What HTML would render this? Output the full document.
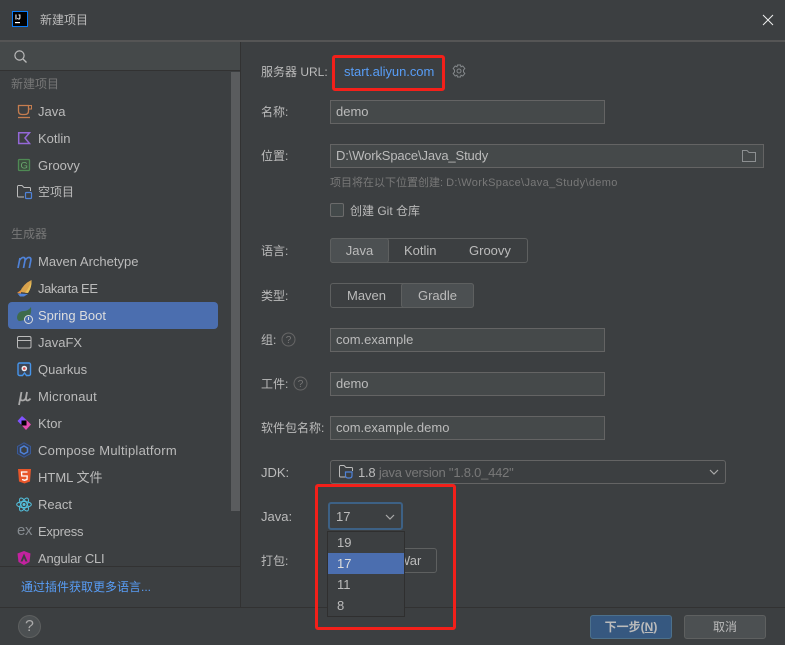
<!DOCTYPE html>
<html><head><meta charset="utf-8"><style>
html,body{margin:0;padding:0}
#r{position:relative;width:785px;height:645px;overflow:hidden;background:#3c3f41;font-family:"Liberation Sans","Noto Sans CJK SC",sans-serif;font-size:13px;color:#bbb}
#r div,#r span,#r svg{position:absolute;box-sizing:border-box}
#r span span{position:static}
.t{white-space:nowrap;line-height:18px;height:18px}
.f{background:#45494a;border:1px solid #646464;height:24px}
.s{font-size:12px}
.g{color:#777}
.c{text-align:center}
</style></head><body><div id="r">

<!-- title -->
<svg style="left:12px;top:11px" width="16" height="16" viewBox="0 0 16 16"><rect x=".5" y=".5" width="15" height="15" fill="#000" stroke="#087cfa"/><rect x="3" y="11" width="5" height="1.2" fill="#fff"/><text x="3" y="8.5" font-size="7" font-weight="bold" fill="#fff" font-family="Liberation Sans">IJ</text></svg>
<span class="t s" style="left:40px;top:11px">新建项目</span>
<svg style="left:762px;top:14px" width="12" height="12" viewBox="0 0 12 12"><path d="M1 1L11 11M11 1L1 11" stroke="#eee" stroke-width="1"/></svg>
<div style="left:0;top:40px;width:785px;height:2px;background:#555"></div>

<!-- search -->
<div style="left:0;top:42px;width:240px;height:28px;background:#45494a"></div>
<div style="left:0;top:70px;width:240px;height:1px;background:#323232"></div>
<svg style="left:13px;top:49px" width="15" height="15" viewBox="0 0 15 15"><circle cx="6.5" cy="6.5" r="4.6" fill="none" stroke="#bbb" stroke-width="1.2"/><path d="M10 10L13.5 13.5" stroke="#bbb" stroke-width="1.3"/></svg>
<div style="left:240px;top:42px;width:1px;height:565px;background:#323232"></div>
<div style="left:231px;top:72px;width:9px;height:439px;background:#5a5c5e"></div>

<!-- sidebar -->
<span class="t s g" style="left:11px;top:75px">新建项目</span>
<span class="t" style="left:38px;top:103px">Java</span>
<span class="t" style="left:38px;top:130px">Kotlin</span>
<span class="t" style="left:38px;top:157px">Groovy</span>
<span class="t s" style="left:38px;top:183px">空项目</span>
<span class="t s g" style="left:11px;top:225px">生成器</span>
<span class="t" style="left:38px;top:253px">Maven Archetype</span>
<span class="t" style="left:38px;top:280px;letter-spacing:-.4px">Jakarta EE</span>
<div style="left:8px;top:302px;width:210px;height:27px;background:#4b6eaf;border-radius:4px"></div>
<span class="t" style="left:38px;top:307px;color:#ddd">Spring Boot</span>
<span class="t" style="left:38px;top:334px">JavaFX</span>
<span class="t" style="left:38px;top:361px">Quarkus</span>
<span class="t" style="left:38px;top:388px;letter-spacing:.2px">Micronaut</span>
<span class="t" style="left:38px;top:415px">Ktor</span>
<span class="t" style="left:38px;top:442px;letter-spacing:.25px">Compose Multiplatform</span>
<span class="t" style="left:38px;top:469px">HTML 文件</span>
<span class="t" style="left:38px;top:496px">React</span>
<span class="t" style="left:38px;top:523px;letter-spacing:-.25px">Express</span>
<span class="t" style="left:38px;top:550px;letter-spacing:-.2px">Angular CLI</span>

<!-- sidebar icons -->
<svg style="left:16px;top:103px" width="18" height="16" viewBox="0 0 18 16"><path d="M2.5 2.500H12.500V8Q12.500 11.500 9 11.500H6Q2.500 11.500 2.500 8Z" fill="none" stroke="#c57d4f" stroke-width="1.300"/><path d="M12.500 2.500H15.500V6H12.500" fill="none" stroke="#c57d4f"/><path d="M2 14.500H14" stroke="#c57d4f" stroke-width="1.300"/></svg>
<svg style="left:17px;top:131px" width="15" height="15" viewBox="0 0 15 15"><path d="M1.700 1.700H12.500L8 7L12.500 12.500H1.700Z" fill="none" stroke="#9468d8" stroke-width="1.500"/></svg>
<svg style="left:17px;top:158px" width="14" height="14" viewBox="0 0 14 14"><rect x="1.500" y="1.500" width="11" height="11" rx="1" fill="#3c4c3e" stroke="#4f8a54" stroke-width="1.300"/><text x="3.500" y="10.500" font-size="9.500" fill="#6aaa6f" font-family="Liberation Sans">G</text></svg>
<svg style="left:16px;top:184px" width="17" height="16" viewBox="0 0 17 16"><path d="M8 13H2.500A1 1 0 0 1 1.500 12V2.500A1 1 0 0 1 2.500 1.500H6L8 3.500H13.500A1 1 0 0 1 14.500 4.500V7" fill="none" stroke="#bbb"/><rect x="9.500" y="8.500" width="6" height="6" rx="1" fill="#3c3f41" stroke="#4f82d8" stroke-width="1.200"/></svg>
<svg style="left:16px;top:254px" width="17" height="16" viewBox="0 0 17 16"><path d="M2 14L4 4M3.700 6Q6 3 7.800 3.500Q9.500 4 9 6.500L7.500 14M9.300 6Q11.500 3 13.500 3.500Q15.300 4 14.800 6.500L13.300 14" fill="none" stroke="#4f82d8" stroke-width="1.700"/></svg>
<svg style="left:16px;top:279px" width="17" height="18" viewBox="0 0 17 18"><path d="M15.500 1Q7 5 4 13L12 14Q16 8 15.500 1Z" fill="#d9a24c"/><path d="M15.500 1Q14 8 9 13.600L12 14Q16 8 15.500 1Z" fill="#e8c05a"/><path d="M1 14L5 11L5 14.500Z" fill="#e8923c"/><path d="M1.500 14.500L12 15L8 17.500H4Z" fill="#4f82d8"/></svg>
<svg style="left:16px;top:307px" width="18" height="18" viewBox="0 0 18 18"><path d="M1 10Q2 4 8 4Q12 4 15 0Q16 8 11 12Q6 14 3 14Q1 13 1 10Z" fill="#3f6b4c"/><circle cx="12.500" cy="12.500" r="4" fill="#4b6eaf" stroke="#ddd"/><path d="M12.500 10V13" stroke="#ddd"/></svg>
<svg style="left:17px;top:336px" width="15" height="13" viewBox="0 0 15 13"><rect x=".5" y=".5" width="13.500" height="11.500" rx="1.500" fill="none" stroke="#bbb"/><path d="M1 4.500H14" stroke="#bbb"/></svg>
<svg style="left:17px;top:362px" width="15" height="15" viewBox="0 0 15 15"><path d="M5.500 13.500H2.500A1.500 1.500 0 0 1 1 12V2.500A1.500 1.500 0 0 1 2.500 1H12A1.500 1.500 0 0 1 13.500 2.500V12A1.500 1.500 0 0 1 12 13.500H9.500L7.500 11Z" fill="#3c4555" stroke="#4695eb" stroke-width="1.400"/><circle cx="7.300" cy="6.500" r="2.800" fill="#e9eef2"/><circle cx="7.300" cy="6.500" r="1.300" fill="#d84a4a"/></svg>
<svg style="left:17px;top:389px" width="16" height="18" viewBox="0 0 16 18"><path d="M4.500 3L2 16M4.200 4.500L3.500 9Q3.300 11.500 5.500 11.500Q8 11.500 9 8.500L10 3M10 3L9 9Q8.800 11.500 10.500 11.500Q12 11.500 13.500 9.500" fill="none" stroke="#aaa" stroke-width="1.800"/></svg>
<svg style="left:16px;top:415px" width="16" height="16" viewBox="0 0 16 16"><path d="M6 1L1.500 6L5 9.500L10 4.500Z" fill="#7f52ff"/><path d="M10 4.500L15 9.500L10 15L5 9.500Z" fill="#e44bb0"/><rect x="5.500" y="5.500" width="5" height="5" fill="#000"/></svg>
<svg style="left:16px;top:442px" width="16" height="16" viewBox="0 0 16 16"><path d="M8 .8L14.500 4.400V11.600L8 15.200L1.500 11.600V4.400Z" fill="#34405a" stroke="#3a5a98"/><path d="M8 4L11.500 6V10L8 12L4.500 10V6Z" fill="#3c3f41" stroke="#4f82d8" stroke-width="1.500"/></svg>
<svg style="left:18px;top:469px" width="13" height="15" viewBox="0 0 13 15"><path d="M0 0H13L12 12.500L6.500 14.500L1 12.500Z" fill="#e8562a"/><path d="M9.500 3H3.500L3.800 7H9.200L9 10.500L6.500 11.300L4 10.500" fill="none" stroke="#fff" stroke-width="1.300"/></svg>
<svg style="left:16px;top:497px" width="16" height="15" viewBox="0 0 16 15"><g fill="none" stroke="#53c1de" stroke-width="1"><ellipse cx="8" cy="7.500" rx="7.300" ry="3"/><ellipse cx="8" cy="7.500" rx="7.300" ry="3" transform="rotate(60 8 7.500)"/><ellipse cx="8" cy="7.500" rx="7.300" ry="3" transform="rotate(120 8 7.500)"/></g><circle cx="8" cy="7.500" r="1.500" fill="#53c1de"/></svg>
<span class="t" style="left:17px;top:522px;font-size:15px;color:#858a8f;letter-spacing:-.3px">ex</span>
<svg style="left:17px;top:551px" width="14" height="15" viewBox="0 0 14 15"><path d="M7 0L13.500 2.500L12.500 11L7 14L1.500 11L.5 2.500Z" fill="#c3229f"/><path d="M7 2.500L3.500 10.500H5.500L7 7L8.500 10.500H10.500Z" fill="#3c3f41"/></svg>

<!-- sidebar footer: covers clipped list -->
<div style="left:0;top:566px;width:240px;height:1px;background:#323232"></div>
<div style="left:0;top:567px;width:240px;height:40px;background:#3c3f41"></div>
<span class="t s" style="left:21px;top:578px;color:#589df6">通过插件获取更多语言...</span>
<div style="left:0;top:607px;width:785px;height:1px;background:#323232"></div>
<div class="c" style="left:18px;top:615px;width:23px;height:23px;border-radius:50%;background:#4c5052;border:1px solid #5e6060;line-height:21px;font-size:16px;color:#aaa">?</div>

<!-- form -->
<span class="t s" style="left:261px;top:63px">服务器 URL:</span>
<span class="t" style="left:344px;top:63px;color:#589df6;letter-spacing:-.05px">start.aliyun.com</span>
<svg style="left:452px;top:64px" width="14" height="14" viewBox="0 0 14 14"><path d="M5.500 1H8.500L9 2.800L10.800 2L12.800 4.500L11.500 6V8L12.800 9.500L10.800 12L9 11.200L8.500 13H5.500L5 11.200L3.200 12L1.200 9.500L2.500 8V6L1.200 4.500L3.200 2L5 2.800Z" fill="none" stroke="#84888b"/><circle cx="7" cy="7" r="2" fill="none" stroke="#84888b"/></svg>

<span class="t s" style="left:261px;top:103px">名称:</span>
<div class="f" style="left:330px;top:100px;width:275px"></div>
<span class="t" style="left:336px;top:103px">demo</span>

<span class="t s" style="left:261px;top:147px">位置:</span>
<div class="f" style="left:330px;top:144px;width:434px"></div>
<span class="t" style="left:336px;top:147px;letter-spacing:-.13px">D:\WorkSpace\Java_Study</span>
<svg style="left:741px;top:149px" width="16" height="14" viewBox="0 0 16 14"><path d="M1.500 12.500V1.500H6L8 3.500H14.500V12.500Z" fill="none" stroke="#8c8f91"/></svg>
<span class="t" style="left:330px;top:174px;font-size:11px;color:#787878">项目将在以下位置创建: <span style="letter-spacing:.35px">D:\WorkSpace\Java_Study\demo</span></span>

<div style="left:330px;top:203px;width:14px;height:14px;background:#43494a;border:1px solid #6b6b6b;border-radius:2px"></div>
<span class="t s" style="left:350px;top:202px">创建 Git 仓库</span>

<span class="t s" style="left:261px;top:242px">语言:</span>
<div style="left:330px;top:238px;width:198px;height:25px;border:1px solid #5e6060;border-radius:3px"></div>
<div class="c" style="left:330px;top:238px;width:59px;height:25px;background:#4c5052;border:1px solid #5e6060;border-radius:3px;line-height:24px">Java</div>
<span class="t" style="left:404px;top:242px">Kotlin</span>
<span class="t" style="left:469px;top:242px">Groovy</span>

<span class="t s" style="left:261px;top:287px">类型:</span>
<div style="left:330px;top:283px;width:144px;height:25px;border:1px solid #5e6060;border-radius:3px"></div>
<span class="t" style="left:347px;top:287px">Maven</span>
<div class="c" style="left:401px;top:283px;width:73px;height:25px;background:#4c5052;border:1px solid #5e6060;border-radius:3px;line-height:24px">Gradle</div>

<span class="t s" style="left:261px;top:331px">组:</span>
<svg style="left:281px;top:332px" width="15" height="15" viewBox="0 0 15 15"><circle cx="7.500" cy="7.500" r="6.500" fill="none" stroke="#666"/><text x="4.800" y="11" font-size="10" fill="#777" font-family="Liberation Sans">?</text></svg>
<div class="f" style="left:330px;top:328px;width:275px"></div>
<span class="t" style="left:336px;top:331px">com.example</span>

<span class="t s" style="left:261px;top:375px">工件:</span>
<svg style="left:293px;top:376px" width="15" height="15" viewBox="0 0 15 15"><circle cx="7.500" cy="7.500" r="6.500" fill="none" stroke="#666"/><text x="4.800" y="11" font-size="10" fill="#777" font-family="Liberation Sans">?</text></svg>
<div class="f" style="left:330px;top:372px;width:275px"></div>
<span class="t" style="left:336px;top:375px">demo</span>

<span class="t s" style="left:261px;top:419px">软件包名称:</span>
<div class="f" style="left:330px;top:416px;width:275px"></div>
<span class="t" style="left:336px;top:419px">com.example.demo</span>

<span class="t" style="left:261px;top:464px">JDK:</span>
<div style="left:330px;top:460px;width:396px;height:24px;border:1px solid #646464;border-radius:3px"></div>
<svg style="left:338px;top:464px" width="17" height="16" viewBox="0 0 17 16"><path d="M8 13H2.500A1 1 0 0 1 1.500 12V2.500A1 1 0 0 1 2.500 1.500H6L8 3.500H13.500A1 1 0 0 1 14.500 4.500V7" fill="none" stroke="#bbb"/><path d="M7.500 8H14V11.500Q14 14 11.500 14H10Q7.500 14 7.500 11.500Z" fill="#3c3f41" stroke="#4f82d8" stroke-width="1.200"/></svg>
<span class="t" style="left:358px;top:464px;letter-spacing:-.22px">1.8 <span style="color:#787878">java version "1.8.0_442"</span></span>
<svg style="left:708px;top:468px" width="12" height="8" viewBox="0 0 12 8"><path d="M2 2L6 6L10 2" fill="none" stroke="#aaa" stroke-width="1.200"/></svg>

<span class="t" style="left:261px;top:508px">Java:</span>
<div style="left:328px;top:502px;width:75px;height:28px;background:#3c3f41;border:2px solid #3d6185;border-radius:3px"></div>
<span class="t" style="left:336px;top:508px">17</span>
<svg style="left:384px;top:513px" width="12" height="8" viewBox="0 0 12 8"><path d="M2 2L6 6L10 2" fill="none" stroke="#aaa" stroke-width="1.200"/></svg>

<span class="t s" style="left:261px;top:552px">打包:</span>
<div style="left:380px;top:548px;width:57px;height:25px;border:1px solid #5e6060;border-radius:3px"></div>
<span class="t" style="left:398px;top:552px">War</span>

<!-- popup -->
<div style="left:327px;top:531px;width:78px;height:86px;background:#3c3f41;border:1px solid #2f2f2f"></div>
<div style="left:328px;top:553px;width:76px;height:21px;background:#4b6eaf"></div>
<span class="t" style="left:337px;top:534px">19</span>
<span class="t" style="left:337px;top:555px;color:#ddd">17</span>
<span class="t" style="left:337px;top:576px">11</span>
<span class="t" style="left:337px;top:597px">8</span>

<!-- buttons -->
<div class="c" style="left:590px;top:615px;width:82px;height:24px;background:#365880;border:1px solid #4c708c;border-radius:3px;line-height:23px;font-size:12px;font-weight:bold;color:#bbb">下一步(<u>N</u>)</div>
<div class="c" style="left:684px;top:615px;width:82px;height:24px;background:#4c5052;border:1px solid #5e6060;border-radius:3px;line-height:23px;font-size:12px">取消</div>

<!-- red boxes -->
<div style="left:332px;top:55px;width:113px;height:36px;border:3px solid #f3201a;border-radius:3px"></div>
<div style="left:315px;top:484px;width:141px;height:146px;border:3px solid #f3201a;border-radius:3px"></div>

</div></body></html>
